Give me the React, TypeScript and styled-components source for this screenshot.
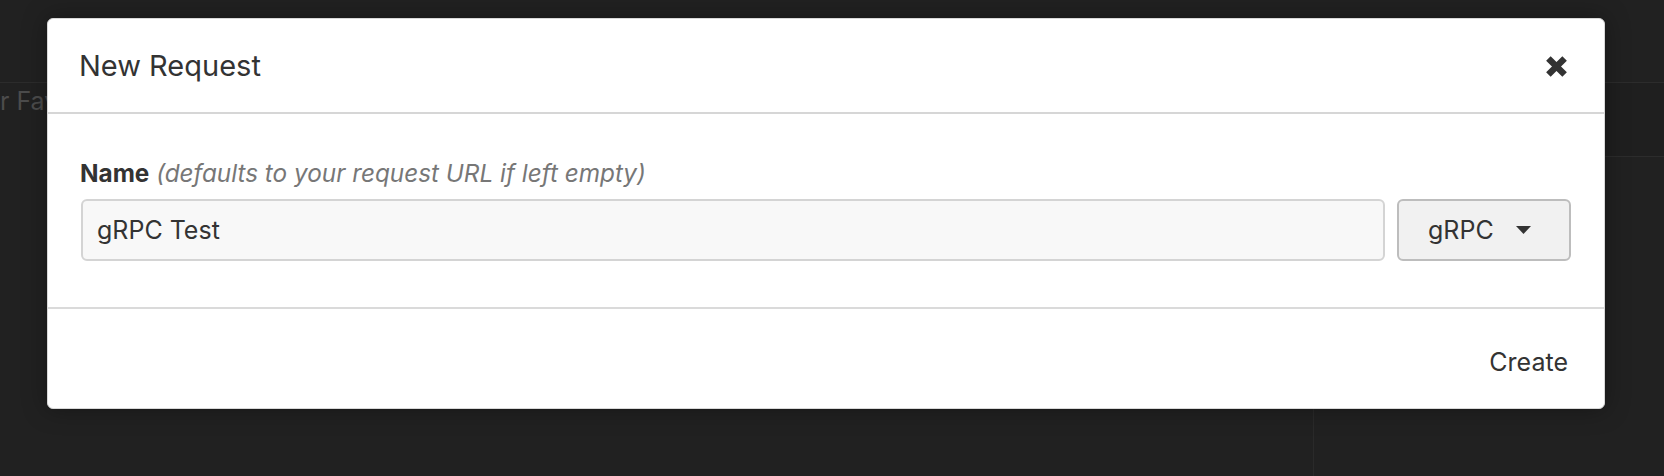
import React from "react";
import styled, { createGlobalStyle } from "styled-components";

const GlobalStyle = createGlobalStyle`
  html, body {
    margin: 0;
    padding: 0;
    background: #212121;
  }
  body {
    font-family: Inter, "Noto Sans", "Liberation Sans", sans-serif;
    color: #333;
  }
  * {
    box-sizing: border-box;
  }
`;

/* app behind the dialog */
const Backdrop = styled.div`
  position: relative;
  height: 476px;
  overflow: hidden;
  background: #212121;
  display: flex;
  flex-direction: column;
`;

const TopBar = styled.div`
  height: 83px;
  border-bottom: 1px solid #2c2c2c;
`;

const Main = styled.div`
  flex: 1;
  display: flex;
`;

const LeftPane = styled.div`
  width: 1314px;
  border-right: 1px solid #2a2a2a;
`;

const FilterText = styled.div`
  padding-top: 3px;
  font-size: 25px;
  line-height: 30px;
  color: #4c4c4c;
  white-space: nowrap;
`;

const RightPane = styled.div`
  flex: 1;
`;

const PaneHeader = styled.div`
  height: 74px;
  background: #1f1f1f;
  border-bottom: 1px solid #2c2c2c;
`;

/* dialog */
const Modal = styled.div`
  position: absolute;
  top: 18px;
  left: 47px;
  width: 1558px;
  background: #fff;
  border: 1px solid #d8d8d8;
  border-radius: 6px;
  box-shadow: 0 0 24px rgba(0, 0, 0, 0.35);
  overflow: hidden;
`;

const ModalHeader = styled.div`
  height: 95px;
  display: flex;
  align-items: center;
  justify-content: space-between;
  padding: 0 37px 0 31px;
  border-bottom: 2px solid #d6d6d6;
`;

const Title = styled.h1`
  margin: 0;
  font-size: 29px;
  line-height: 34px;
  font-weight: 400;
  color: #333;
`;

const CloseButton = styled.button`
  display: flex;
  padding: 0;
  border: 0;
  background: none;
  cursor: pointer;
  color: #333;
  margin-top: 2px;
`;

const ModalBody = styled.div`
  padding: 44px 33px 46px 33px;
`;

const Label = styled.label`
  display: block;
  margin: 0 0 11px -1px;
  font-size: 24.3px;
  line-height: 30px;
  color: #333;
  white-space: nowrap;
`;

const LabelName = styled.strong`
  font-weight: 700;
`;

const Hint = styled.em`
  font-style: italic;
  color: #777;
`;

const FieldRow = styled.div`
  display: grid;
  grid-template-columns: 1fr 174px;
  gap: 12px;
`;

const TextInput = styled.input`
  height: 62px;
  padding: 0 14px;
  border: 2px solid #d4d4d4;
  border-radius: 6px;
  background: #f8f8f8;
  font-family: inherit;
  font-size: 25px;
  color: #333;
  outline: none;
`;

const SelectButton = styled.button`
  height: 62px;
  display: flex;
  align-items: center;
  gap: 22px;
  padding: 0 0 0 29px;
  border: 2px solid #bdbdbd;
  border-radius: 6px;
  background: #f1f1f1;
  font-family: inherit;
  font-size: 25px;
  color: #333;
  cursor: pointer;
`;

const ModalFooter = styled.div`
  height: 101px;
  display: flex;
  align-items: center;
  justify-content: flex-end;
  padding: 6px 36px 0 0;
  border-top: 2px solid #dadada;
`;

const FooterButton = styled.button`
  padding: 0;
  border: 0;
  background: none;
  font-family: inherit;
  font-size: 25px;
  line-height: 30px;
  color: #333;
  cursor: pointer;
`;

const CloseIcon = () => (
  <svg width="21" height="21" viewBox="0 0 21 21" aria-hidden="true">
    <path
      d="M2.4 2.4 L18.6 18.6 M18.6 2.4 L2.4 18.6"
      stroke="currentColor"
      strokeWidth="6.4"
      strokeLinecap="butt"
    />
  </svg>
);

const Caret = () => (
  <svg width="15" height="8" viewBox="0 0 15 8" aria-hidden="true">
    <path d="M0 0 H15 L7.5 8 Z" fill="#333" />
  </svg>
);

const App: React.FC = () => {
  return (
    <>
      <GlobalStyle />
      <Backdrop>
        <TopBar />
        <Main>
          <LeftPane>
            <FilterText>r Favorites</FilterText>
          </LeftPane>
          <RightPane>
            <PaneHeader />
          </RightPane>
        </Main>

        <Modal>
          <ModalHeader>
            <Title>New Request</Title>
            <CloseButton aria-label="Close">
              <CloseIcon />
            </CloseButton>
          </ModalHeader>
          <ModalBody>
            <Label>
              <LabelName>Name</LabelName>{" "}
              <Hint>(defaults to your request URL if left empty)</Hint>
            </Label>
            <FieldRow>
              <TextInput defaultValue="gRPC Test" />
              <SelectButton>
                gRPC
                <Caret />
              </SelectButton>
            </FieldRow>
          </ModalBody>
          <ModalFooter>
            <FooterButton>Create</FooterButton>
          </ModalFooter>
        </Modal>
      </Backdrop>
    </>
  );
};

export default App;
